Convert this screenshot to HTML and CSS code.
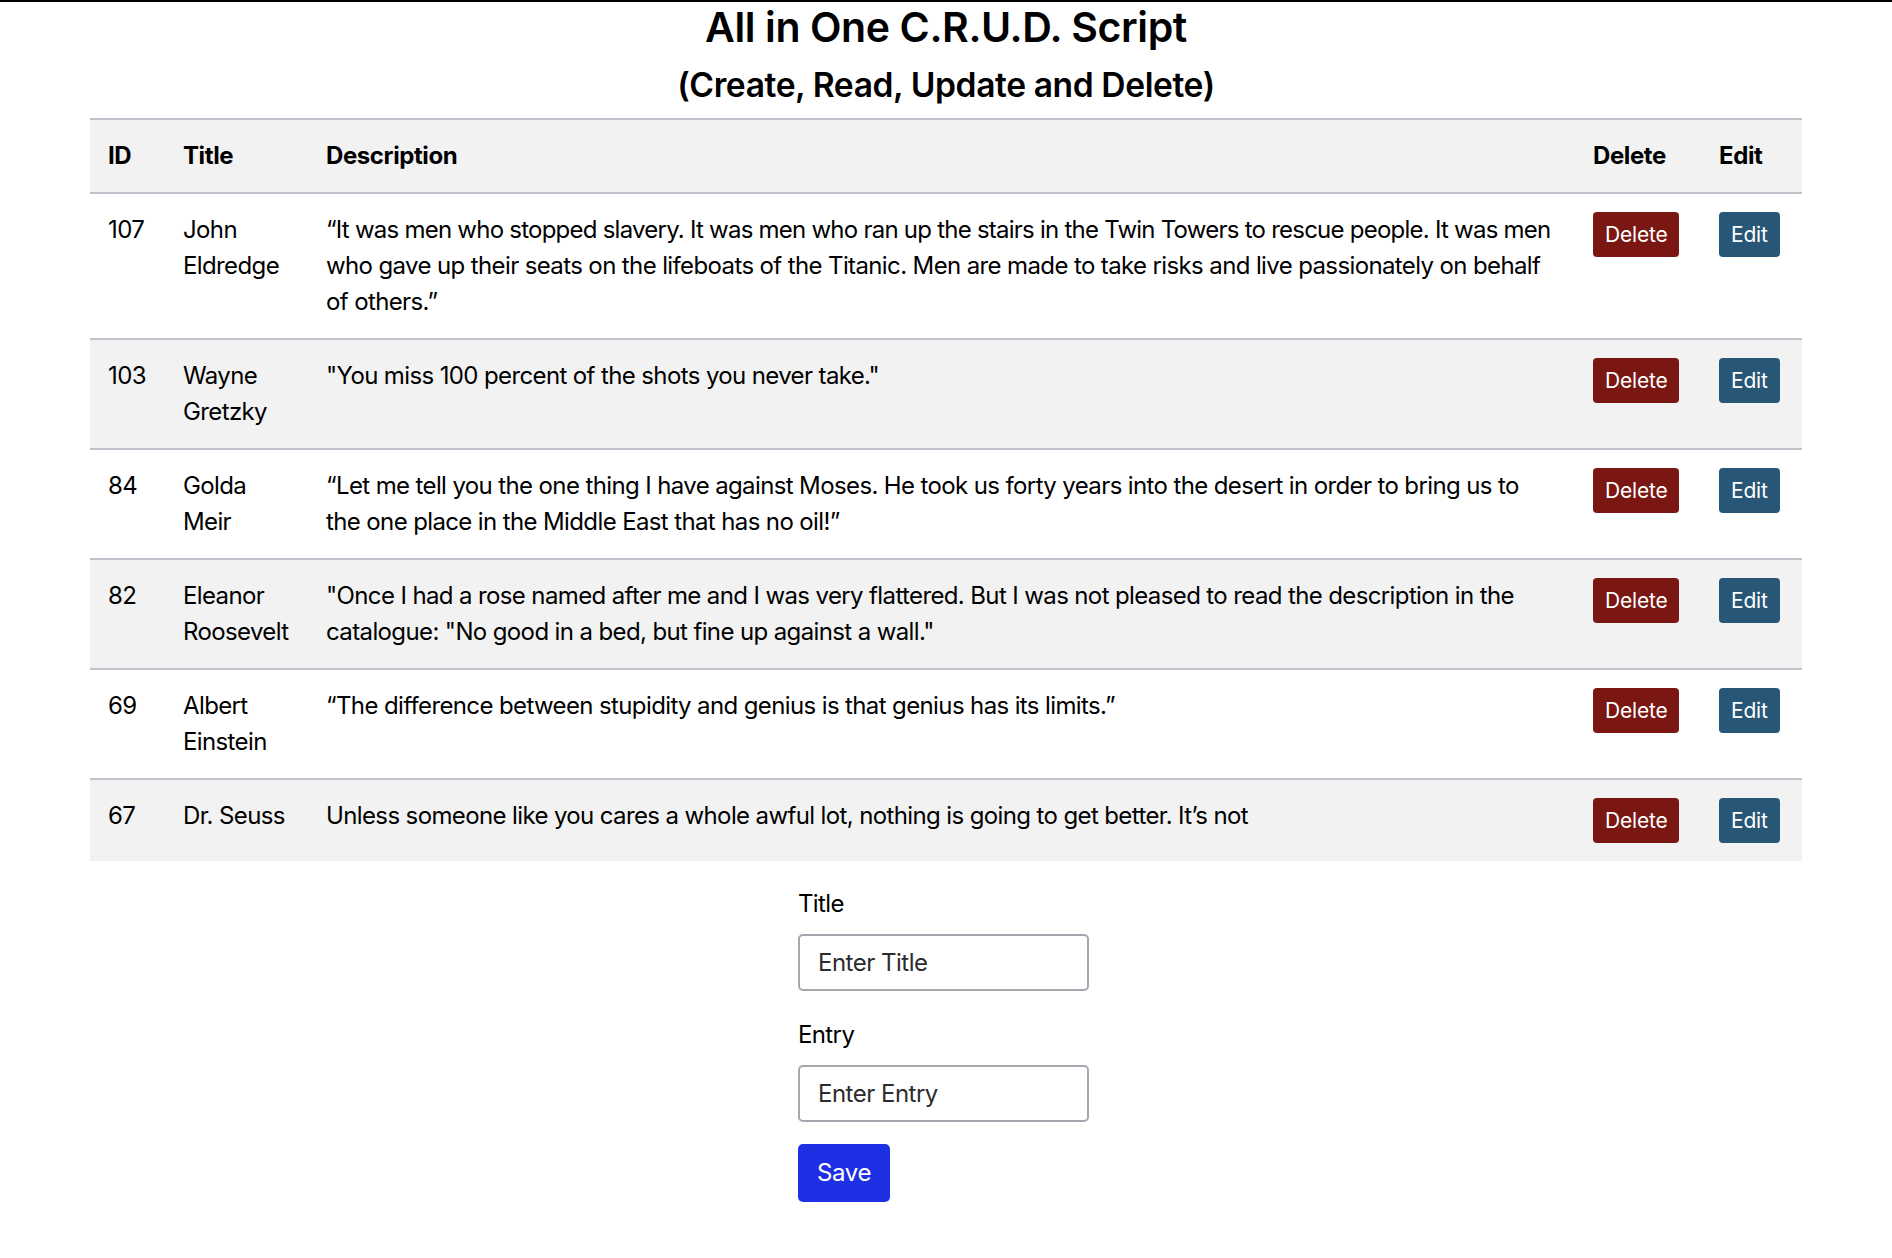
FILE: index.html
```html
<!DOCTYPE html>
<html lang="en">
<head>
<meta charset="utf-8">
<title>All in One C.R.U.D. Script</title>
<link rel="stylesheet" href="styles.css">
</head>
<body>
<div class="topbar"></div>
<header class="heading">
  <h1 class="title">All in One C.R.U.D. Script</h1>
  <h2 class="subtitle">(Create, Read, Update and Delete)</h2>
</header>
<main class="wrap">
  <table class="crud">
    <thead>
      <tr>
        <th class="c-id">ID</th>
        <th class="c-title">Title</th>
        <th class="c-desc">Description</th>
        <th class="c-del">Delete</th>
        <th class="c-edit">Edit</th>
      </tr>
    </thead>
    <tbody>
      <tr>
        <td>107</td>
        <td>John Eldredge</td>
        <td><span class="tight">“It was men who stopped slavery. It was men who ran up the stairs in the Twin Towers to rescue people. It was men</span> who gave up their seats on the lifeboats of the Titanic. Men are made to take risks and live passionately on behalf of others.”</td>
        <td><button class="btn btn-del">Delete</button></td>
        <td><button class="btn btn-edit">Edit</button></td>
      </tr>
      <tr>
        <td>103</td>
        <td>Wayne Gretzky</td>
        <td>"You miss 100 percent of the shots you never take."</td>
        <td><button class="btn btn-del">Delete</button></td>
        <td><button class="btn btn-edit">Edit</button></td>
      </tr>
      <tr>
        <td>84</td>
        <td>Golda Meir</td>
        <td>“Let me tell you the one thing I have against Moses. He took us forty years into the desert in order to bring us to the one place in the Middle East that has no oil!”</td>
        <td><button class="btn btn-del">Delete</button></td>
        <td><button class="btn btn-edit">Edit</button></td>
      </tr>
      <tr>
        <td>82</td>
        <td>Eleanor Roosevelt</td>
        <td>"Once I had a rose named after me and I was very flattered. But I was not pleased to read the description in the catalogue: "No good in a bed, but fine up against a wall."</td>
        <td><button class="btn btn-del">Delete</button></td>
        <td><button class="btn btn-edit">Edit</button></td>
      </tr>
      <tr>
        <td>69</td>
        <td>Albert Einstein</td>
        <td>“The difference between stupidity and genius is that genius has its limits.”</td>
        <td><button class="btn btn-del">Delete</button></td>
        <td><button class="btn btn-edit">Edit</button></td>
      </tr>
      <tr>
        <td>67</td>
        <td>Dr. Seuss</td>
        <td>Unless someone like you cares a whole awful lot, nothing is going to get better. It’s not</td>
        <td><button class="btn btn-del">Delete</button></td>
        <td><button class="btn btn-edit">Edit</button></td>
      </tr>
    </tbody>
  </table>

  <form class="entry-form">
    <label class="field-label" for="title">Title</label>
    <input class="field-input" id="title" type="text" placeholder="Enter Title">
    <label class="field-label" for="entry">Entry</label>
    <input class="field-input field-input-last" id="entry" type="text" placeholder="Enter Entry">
    <button type="button" class="btn-save">Save</button>
  </form>
</main>
</body>
</html>
```

FILE: styles.css
```css
* { box-sizing: border-box; }

html, body {
  margin: 0;
  padding: 0;
  background: #ffffff;
}

body {
  font-family: Inter, "Noto Sans", "Liberation Sans", sans-serif;
  font-size: 24px;
  line-height: 36px;
  letter-spacing: -0.62px;
  color: #000;
}

.topbar {
  height: 2px;
  background: #000;
}

.heading {
  text-align: center;
}

.title {
  margin: 0;
  padding-top: 1px;
  font-size: 41px;
  line-height: 48px;
  font-weight: 600;
  letter-spacing: -0.4px;
}

.subtitle {
  margin: 0;
  padding-top: 14px;
  font-size: 33.6px;
  line-height: 40px;
  font-weight: 600;
  letter-spacing: -0.4px;
}

.wrap {
  margin: 13px 90px 0 90px;
}

.crud {
  width: 100%;
  border-collapse: collapse;
  border-top: 2px solid #c0c3cb;
}

.crud th,
.crud td {
  padding: 18px 18px;
  text-align: left;
  vertical-align: top;
  border-bottom: 2px solid #c0c3cb;
}

.crud tbody tr:last-child td {
  border-bottom: none;
}

.crud th {
  font-weight: 700;
  letter-spacing: -0.4px;
  background: #f2f2f2;
}

.crud tbody tr:nth-child(even) td {
  background: #f2f2f2;
}

.tight {
  letter-spacing: -0.76px;
}

.c-id { width: 75px; }
.c-title { width: 143px; }
.c-del { width: 126px; }
.c-edit { width: 101px; }

.btn {
  display: inline-block;
  border: none;
  border-radius: 4px;
  color: #fff;
  font-family: Inter, "Noto Sans", "Liberation Sans", sans-serif;
  font-size: 21px;
  line-height: 31px;
  letter-spacing: -0.2px;
  padding: 7px 12px;
  margin: 0;
  cursor: pointer;
}

.btn-del { background: #7a1712; }
.btn-edit { background: #275677; }

.entry-form {
  width: 296px;
  margin: 25px auto 0 auto;
  display: flex;
  flex-direction: column;
  align-items: flex-start;
}

.field-label {
  display: block;
  margin-bottom: 12px;
}

.field-input {
  width: 291px;
  height: 57px;
  margin: 0 0 26px 0;
  padding: 0 18px;
  border: 2px solid #a3a7ae;
  border-radius: 5px;
  font-family: Inter, "Noto Sans", "Liberation Sans", sans-serif;
  font-size: 24px;
  letter-spacing: -0.5px;
  color: #000;
  background: #fff;
}

.field-input-last {
  margin-bottom: 22px;
}

.field-input::placeholder {
  color: #2b2c30;
  opacity: 1;
}

.btn-save {
  margin-top: 0;
  border: none;
  border-radius: 5px;
  background: #1e30e3;
  color: #fff;
  font-family: Inter, "Noto Sans", "Liberation Sans", sans-serif;
  font-size: 24px;
  line-height: 36px;
  letter-spacing: -0.35px;
  padding: 11px 19px;
  cursor: pointer;
}
```
